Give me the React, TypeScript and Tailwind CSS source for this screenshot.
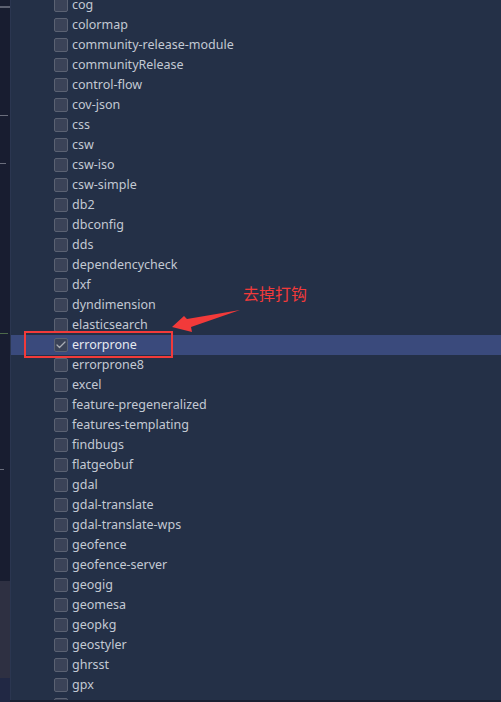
import { Check } from "lucide-react";

const items = [
  "cog", "colormap", "community-release-module", "communityRelease", "control-flow",
  "cov-json", "css", "csw", "csw-iso", "csw-simple", "db2", "dbconfig", "dds",
  "dependencycheck", "dxf", "dyndimension", "elasticsearch", "errorprone", "errorprone8",
  "excel", "feature-pregeneralized", "features-templating", "findbugs", "flatgeobuf",
  "gdal", "gdal-translate", "gdal-translate-wps", "geofence", "geofence-server", "geogig",
  "geomesa", "geopkg", "geostyler", "ghrsst", "gpx", "gpx-extra",
];

function Row({ name }: { name: string }) {
  const active = name === "errorprone";
  return (
    <div className={`flex h-5 items-center shrink-0 pl-[43px] ${active ? "bg-[#3a4a7c] text-[#e6e9f0]" : "text-[#c3c9d3]"}`}>
      <span className="flex h-[14px] w-[14px] items-center justify-center rounded-[2px] border border-[#5b6273] bg-[#3b4358]">
        {active && <Check size={12} strokeWidth={2.5} className="text-[#a9adb6]" />}
      </span>
      <span className="ml-[4px] text-[12.5px] leading-5">{name}</span>
    </div>
  );
}

function Gutter() {
  return (
    <div className="flex w-[10px] shrink-0 flex-col bg-[#181d30]">
      <div className="mt-[6px] h-[2px] w-[10px] bg-[#5c6070]" />
      <div className="mt-[107px] h-px w-[8px] bg-[#6a6e7c]" />
      <div className="mt-[47px] h-px w-[6px] bg-[#6a6e7c]" />
      <div className="mt-[169px] h-px w-[8px] bg-[#4d6a4a]" />
      <div className="mt-[135px] h-px w-[4px] bg-[#6a6e7c]" />
      <div className="mt-[111px] h-[97px] w-[10px] bg-[#2e3042]" />
      <div className="h-[24px] w-[10px] bg-[#212844]" />
    </div>
  );
}

export default function App() {
  return (
    <div className="relative flex h-[702px] w-[501px] overflow-hidden bg-[#243047] font-['Noto_Sans',sans-serif]">
      <Gutter />
      <div className="flex min-w-0 flex-1 flex-col border-l border-[#2b3650]">
        <div className="-mt-[5px] flex flex-col">
          {items.map((n) => (
            <Row key={n} name={n} />
          ))}
        </div>
      </div>
      <div className="absolute bottom-0 left-[10px] right-0 h-[2px] bg-[#1a2133]" />

      <div className="absolute left-[24px] top-[331px] h-[27px] w-[149px] border-2 border-[#f23a3a]" />
      <svg className="absolute left-0 top-0" width="501" height="702">
        <polygon points="172,327 184,316 187,319 240,310 191,327 192,332" fill="#f23a3a" />
      </svg>
      <div className="absolute left-[243px] top-[283px] text-[16px] leading-5 text-[#f23a3a] font-['Noto_Sans_CJK_SC',sans-serif]">
        去掉打钩
      </div>
    </div>
  );
}
